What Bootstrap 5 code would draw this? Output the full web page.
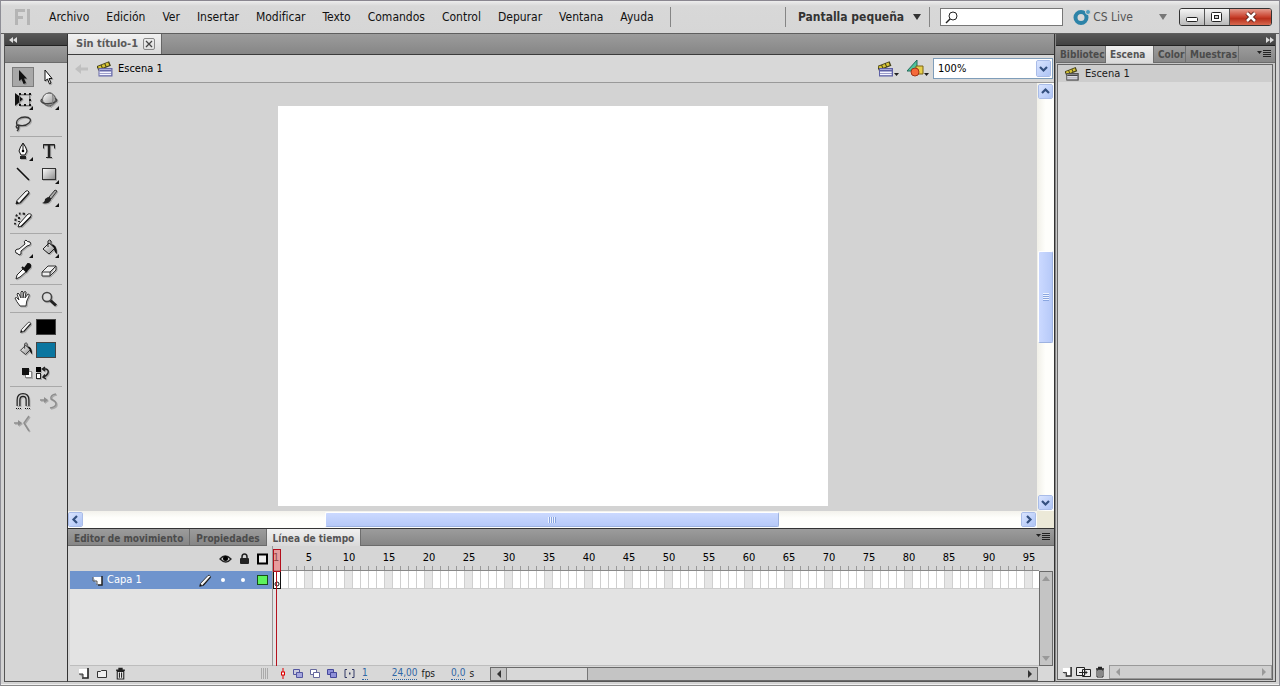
<!DOCTYPE html>
<html lang="es" data-bs-theme="light">
<head>
<meta charset="utf-8">
<meta name="viewport" content="width=device-width, initial-scale=1">
<title>Sin título-1</title>
<link href="https://cdn.jsdelivr.net/npm/bootstrap@5.3.0/dist/css/bootstrap.min.css" rel="stylesheet">
<script src="https://cdn.jsdelivr.net/npm/bootstrap@5.3.0/dist/js/bootstrap.bundle.min.js"></script>
<style>
  :root { --chrome:#d6d6d6; --ink:#1a1a1a; --edge:#4a4a4a; --strip:linear-gradient(#9c9c9c,#868686); }
  body { font-family:"DejaVu Sans Condensed","DejaVu Sans",sans-serif; font-size:11px; line-height:16px; color:var(--ink); background:#d3d3d3; }
  button { padding:0; border:0; background:none; color:inherit; line-height:inherit; }
  svg { display:block; flex:none; }
  .app { height:100vh; min-height:600px; border-top:1px solid #8a8790; border-left:1px solid #8e8e96; border-right:1px solid #8e8e96; border-bottom:1px solid #8a8a8a; }

  /* menu bar */
  .menubar { height:33px; font-size:12px; background:linear-gradient(#ededed,#d8d8d8 5px,#d6d6d6); border-bottom:1px solid #5f5f5f; padding:0 7px 0 13px; }
  .logo { width:35px; }
  .menubar a { color:#111; text-decoration:none; }
  .menus { gap:17px; }
  .vsep { width:1px; height:20px; background:#858585; }
  .workspace { font-size:12px; font-weight:bold; color:#333; gap:9px; }
  .search { width:123px; height:18px; border:1px solid #777; background:#fff; margin:0 10px; }
  .search input { width:100%; min-width:0; border:0; outline:0; background:none; font-size:11px; }
  .cslive { color:#555; gap:2px; }
  .winbtns { border:1px solid #333; border-radius:3px; height:18px; width:93px; overflow:hidden; margin-left:12px; }
  .winbtns button { flex:25 1 0; background:linear-gradient(#f4f4f4,#b9b9b9); border-right:1px solid #555; display:flex; align-items:center; justify-content:center; }
  .winbtns button.closer { flex-grow:42; border:0; background:linear-gradient(#e59a8c,#c8402c 50%,#b8301c 60%,#d8694f); }

  .main { padding:0 3px 2px 3px; min-height:0; border-bottom:1px solid #efefef; }
  .strip { height:17px; background:var(--strip); border-bottom:1px solid #6b6b6b; }
  .darkstrip { height:12px; background:linear-gradient(#585858,#424242); border-bottom:1px solid #222; color:#ddd; }

  /* tool box */
  .toolbox { width:63px; flex:none; background:var(--chrome); border-left:1px solid #555; border-bottom:1px solid #555; }
  .tgroup { margin:0 5px; padding:2px 0; border-bottom:1px solid #a9a9a9; display:grid; grid-template-columns:26px 26px; grid-auto-rows:23px; }
  .tgroup:last-child { border:0; }
  .tgroup button { width:22px; height:20px; margin:auto; display:flex; align-items:center; justify-content:center; position:relative; }
  .tgroup svg { filter:drop-shadow(1px 1px 0 #0003); }
  .tgroup button.on { background:#a8a8a8; border:1px solid #7c7c7c; }
  .more::after { content:""; position:absolute; right:1px; bottom:0; border:2px solid; border-color:transparent #111 #111 transparent; }
  .colours { grid-template-columns:24px 24px; }
  .tgroup .swatch { width:20px; height:16px; border:1px solid #444; }
  .ink { background:#000; } .fill { background:#0a76a0; }

  /* document area */
  .doc { min-width:0; border-left:1px solid #333; border-right:1px solid #333; border-bottom:1px solid #555; background:#e3e3e3; }
  .doctabs { height:21px; background:var(--strip); border-bottom:1px solid #3c3c3c; }
  .doctab { width:94px; background:linear-gradient(#f2f2f2,#d9d9d9); border-right:1px solid #666; font-weight:bold; color:#5a5a5a; padding-left:8px; gap:5px; }
  .shut { width:12px; height:12px; border:1px solid #888; border-radius:2px; color:#555; }
  .editbar { height:28px; background:#d8d8d8; border-bottom:1px solid #999; padding:0 1px 0 7px; }
  .zoombox { width:120px; height:21px; border:1px solid #7f9db9; background:#fff; position:relative; }
  .zoombox select { width:100%; height:100%; border:0; appearance:none; background:none; padding:0 4px; font-size:11px; color:#000; }
  .zoombox span { position:absolute; right:1px; top:1px; pointer-events:none; height:17px; }
  .work { min-height:0; background:#d3d3d3; }
  .pasteboard { padding-top:23px; overflow:hidden; }
  .canvas { width:550px; height:400px; background:#fff; }
  .xpbtn { width:15px; height:15px; border-radius:2px; border:1px solid #fff; background:linear-gradient(135deg,#d9e4ff,#aec4f5); display:flex; align-items:center; justify-content:center; flex:none; outline:1px solid #a9bce8; outline-offset:-1px; color:#34507f; }
  .track-v { width:17px; background:linear-gradient(90deg,#f1f0e8,#fefefb 50%); padding:1px 0 1px 1px; }
  .track-h { height:17px; background:linear-gradient(#f3f2ec,#fefefb 40%); padding:1px 1px 1px 0; flex:1; }
  .knob { border:1px solid #fff; border-bottom-color:#9db2e0; border-right-color:#9db2e0; border-radius:2px; display:flex; align-items:center; justify-content:center; }
  .track-h .knob { height:15px; flex:15 1 0; background:linear-gradient(#cbd9ff,#b6c9f8); }
  .track-v .knob { width:15px; flex:3 1 0; background:linear-gradient(90deg,#cbd9ff,#b6c9f8); }
  .track-h .gap { flex:8 1 0; } .track-v .gap { flex:5 1 0; }
  .corner { width:17px; height:17px; background:#ece9d8; }

  /* panels */
  .ptabs { border-top:1px solid #333; height:18px; background:var(--strip); border-bottom:1px solid #6b6b6b; }
  .ptab { font-size:10px; font-weight:bold; color:#4b4b4b; border-right:1px solid #6e6e6e; height:100%; white-space:nowrap; text-align:left; }
  .ptab.on { background:linear-gradient(#f0f0f0,#dadada); height:calc(100% + 1px); color:#555; }
  .ptabs .ptab { padding:2px 6px 0 6px; }
  .timeline { height:135px; padding-left:2px; background:#d6d6d6; }
  .layers { width:202px; flex:none; }
  .cols { gap:7px; }
  .layers .lhead { height:25px; padding-right:4px; }
  .layer { height:18px; background:#6f94cd; color:#fff; padding:0 4px 0 22px; }
  .empty { background:#e3e3e3; border-bottom:1px solid #bdbdbd; }
  .grid-area { min-width:0; border-left:1px solid #999; position:relative; }
  .ruler { height:25px; overflow:hidden; border-bottom:1px solid #888; color:#000; padding-top:4px; background:repeating-linear-gradient(90deg,transparent 0 7px,#999 7px 8px) left bottom / 100% 4px no-repeat; }
  .ruler span { width:40px; flex:none; text-align:center; }
  .ruler span:first-child { width:16px; }
  .frames { height:18px; background:repeating-linear-gradient(90deg,transparent 0 7px,#cfcfcf 7px 8px),repeating-linear-gradient(90deg,#fff 0 32px,#e6e6e6 32px 40px); border-bottom:1px solid #ccc; }
  .key { width:8px; height:18px; border:1px solid #111; border-top:0; background:#fff; padding-top:10px; }
  .playhead { position:absolute; left:0; top:3px; bottom:0; width:8px; }
  .playhead::before { content:""; display:block; height:23px; border:1px solid #b30f1c; background:#f2777799; }
  .playhead::after { content:""; position:absolute; left:3px; top:23px; bottom:0; width:1px; background:#b5121e; }
  .gbar { background:#c4c4c4; border:1px solid #6a6a6a; color:#333; }
  .gbar.dim { color:#999; }
  .gbar-v { width:14px; margin:25px 1px 0 0; padding:4px 0; }
  .foot { height:15px; background:#d8d8d8; }
  .foot .hot { color:#2f67a5; border-bottom:1px dotted #2f67a5; line-height:12px; font-size:10px; text-decoration:none; }
  .foot .unit { font-size:10px; line-height:12px; }
  .hbar { height:14px; }
  .hbar .cap { width:15px; height:100%; display:flex; align-items:center; justify-content:center; }
  .hbar .bar-knob { width:15%; background:#d8d8d8; border-left:1px solid #777; border-right:1px solid #777; height:100%; }

  .side { width:221px; flex:none; background:#c8c8c8; border-right:1px solid #555; border-bottom:1px solid #555; border-left:1px solid #888; }
  .side .ptab { padding:1px 0 0 4px; }
  .w-lib { width:50px; } .w-scene { width:48px; } .w-colour { width:32px; } .w-swatch { width:53px; }
  .scenes { margin:1px 2px 1px 1px; border:1px solid #666; background:#dcdcdc; }
  .scene { background:#cdcdcd; height:17px; padding-left:7px; gap:5px; }
  .scenefoot { height:14px; }
  .scenes .gbar.dim { background:#cfcfcf; border-color:#999; }
</style>
</head>
<body>
<svg width="0" height="0" class="position-absolute" aria-hidden="true">
  <defs>
    <linearGradient id="lg" x1="0" y1="0" x2="1" y2="1"><stop offset="0" stop-color="#fff"/><stop offset="1" stop-color="#8a8a8a"/></linearGradient>
    <symbol id="clap" viewBox="0 0 16 17"><path d="M0 8.500 12.500 3.500" stroke="#45411a" stroke-width="5"/><path d="M1 8 12 3.500" stroke="#d6c436" stroke-width="3" stroke-dasharray="3 1"/><rect x="1.500" y="8.500" width="13" height="7.500" fill="#f4f4ff" stroke="currentColor"/><path d="M2 10.500h12" stroke="currentColor" stroke-width="2"/><path d="M2 13.500h12M14 9v7M2 15.500h12" stroke="currentColor" stroke-opacity=".6"/></symbol>
    <symbol id="trash" viewBox="0 0 10 12"><path d="M1 3h8M3 1.500h4" stroke="#222" stroke-width="1.500"/><path d="M2 4h6v7H2z" fill="#eee" stroke="#222"/><path d="M4 5v5M6 5v5" stroke="#222"/></symbol>
    <symbol id="page" viewBox="0 0 11 11"><path d="M1 1h9v9H5L1 6z" fill="#fff"/><path d="M10 0v10H4" fill="none" stroke="#222" stroke-width="1.600"/><path d="M1 6h4v4" fill="#999" stroke="#333"/></symbol>
    <symbol id="pencil" viewBox="0 0 18 18"><path d="M3 12.500 12 3q2-1 3 1 0 1-1 2L6 15l-4 1z" fill="#f5f5f5" stroke="#222"/><path d="m2 16 1-3 2 2z" fill="#111"/><path d="M6 15 15 5" stroke="#222" stroke-width="1.500"/></symbol>
    <symbol id="bucket" viewBox="0 0 18 18"><path d="M3 10 9 4l6 5-6 6z" fill="url(#lg)" stroke="#222"/><path d="M8 8V2q2-2 3 0v3" fill="none" stroke="#222"/><path d="M11 5q6 0 6 10-3-2-3-6z" fill="#111"/></symbol>
    <symbol id="chev" viewBox="0 0 9 9"><path d="m1 3 3.500 3.500L8 3" fill="none" stroke="currentColor" stroke-width="2.200"/></symbol>
    <symbol id="menu" viewBox="0 0 14 8"><path d="M0 1h5L2.500 4z" fill="#222"/><path d="M6 .5h8M6 2.500h8M6 4.500h8M6 6.500h8" stroke="#222"/></symbol>
    <symbol id="tri" viewBox="0 0 6 8"><path d="M5 0v8L1 4z" fill="currentColor"/></symbol>
  </defs>
</svg>

<div class="app d-flex flex-column">
  <header class="menubar d-flex align-items-center">
    <div class="logo"><svg width="17" height="18" viewBox="0 0 17 18" fill="none" stroke="#b5b5b5" stroke-width="3" aria-label="Fl"><path d="M2.500 17V2.500H11M2.500 9.500H9M14.500 1v16"/></svg></div>
    <nav class="menus d-flex">
      <a href="#">Archivo</a><a href="#">Edición</a><a href="#">Ver</a><a href="#">Insertar</a><a href="#">Modificar</a><a href="#">Texto</a><a href="#">Comandos</a><a href="#">Control</a><a href="#">Depurar</a><a href="#">Ventana</a><a href="#">Ayuda</a>
    </nav>
    <div class="vsep ms-3"></div>
    <div class="vsep ms-auto me-2"></div>
    <button class="workspace d-flex align-items-center ms-1">Pantalla pequeña <svg width="8" height="6"><path d="M0 0h8L4 6z" fill="#333"/></svg></button>
    <div class="vsep ms-2"></div>
    <label class="search d-flex align-items-center"><svg class="ms-1" width="13" height="13" viewBox="0 0 13 13" fill="none" stroke="#222"><circle cx="8" cy="5" r="4"/><path d="M5 8 1 12" stroke-width="1.500"/></svg><input type="text" aria-label="Buscar"></label>
    <button class="cslive d-flex align-items-center"><svg width="18" height="18" viewBox="0 0 18 18"><circle cx="8" cy="9.500" r="5.500" fill="none" stroke="#2c83a8" stroke-width="4"/><circle cx="15" cy="4" r="2.500" fill="#4c9cbd" stroke="#d6d6d6"/></svg><span>CS Live</span><svg class="ms-4" width="8" height="6"><path d="M0 0h8L4 6z" fill="#777"/></svg></button>
    <div class="winbtns d-flex">
      <button aria-label="Minimizar"><svg width="14" height="12"><rect x="1.500" y="6.500" width="11" height="4" rx="1" fill="#fff" stroke="#222"/></svg></button>
      <button aria-label="Restaurar"><svg width="14" height="12"><rect x="1.500" y="1.500" width="10" height="9" rx="1" fill="#fff" stroke="#222"/><rect x="4.500" y="4.500" width="4" height="3" fill="#ccc" stroke="#222"/></svg></button>
      <button class="closer" aria-label="Cerrar"><svg width="14" height="12"><path d="m3 2 8 8M11 2l-8 8" stroke="#5a2018" stroke-width="4.500"/><path d="m3 2 8 8M11 2l-8 8" stroke="#fff" stroke-width="2.500"/></svg></button>
    </div>
  </header>

  <div class="main d-flex flex-grow-1">
    <aside class="toolbox">
      <div class="darkstrip d-flex align-items-center"><svg class="ms-1" width="9" height="6"><path d="M4 0v6L0 3zM8 0v6L4 3z" fill="#ddd"/></svg></div>
      <div class="strip"></div>
      <div class="tgroup">
        <button class="on" aria-label="Selección"><svg width="18" height="18"><path d="M5 2v11l2.500-2 2 5 2.500-1-2-4.500H13z" fill="#111"/></svg></button>
        <button aria-label="Subselección"><svg width="18" height="18"><path d="M5 2v11l2.500-2 2 5 1.500-1-2-4.500H12z" fill="#fff" stroke="#111"/></svg></button>
        <button class="more" aria-label="Transformación libre"><svg width="20" height="18"><path d="M2 2v13l8-7z" fill="#111"/><rect x="6.500" y="3.500" width="10" height="11" fill="none" stroke="#777"/><path d="M6 2h2v2H6zM11 2h2v2h-2zM16 2h2v2h-2zM16 8h2v2h-2zM16 13h2v2h-2zM11 13h2v2h-2zM6 13h2v2H6z" fill="#111"/></svg></button>
        <button class="more" aria-label="Rotación 3D"><svg width="18" height="18"><circle cx="9" cy="8.500" r="6.500" fill="url(#lg)" stroke="#555"/><path d="M2 8q-3 3 3 4.500 7 1 11-2 2-2-1-3" fill="none" stroke="#444" stroke-width="1.300"/><path d="M8 2q5-2 5 5t-3 9" fill="none" stroke="#777"/></svg></button>
        <button aria-label="Lazo"><svg width="18" height="18" fill="none" stroke="#333" stroke-width="1.300"><path d="M3 11C1 6 6 3 11 3s7 3 4 6-7 3-11 2q-3 1-1 3 3 0 1-3 2 3-1 6"/></svg></button>
      </div>
      <div class="tgroup">
        <button class="more" aria-label="Pluma"><svg width="18" height="18"><path d="M9 1Q6 5 5 9l2 4h4l2-4Q12 5 9 1z" fill="#fff" stroke="#111"/><path d="M9 2v7" stroke="#111"/><circle cx="9" cy="9" r="1.300"/><path d="M6 14h6v3H6z" fill="#222"/></svg></button>
        <button aria-label="Texto"><svg width="18" height="18" fill="none" stroke="#222"><path d="M3.500 6.500v-4h11v4M3 3h12M6 15.500h6"/><path d="M9 3v12" stroke-width="2.500"/></svg></button>
        <button aria-label="Línea"><svg width="18" height="18"><path d="m3 3 12 12" stroke="#111" stroke-width="1.500"/></svg></button>
        <button class="more" aria-label="Rectángulo"><svg width="18" height="18"><rect x="2.500" y="3.500" width="13" height="11" fill="url(#lg)" stroke="#333"/></svg></button>
        <button aria-label="Lápiz"><svg width="18" height="18"><use href="#pencil"/></svg></button>
        <button class="more" aria-label="Pincel"><svg width="18" height="18"><path d="m9 9 6-7 2 1-6 8z" fill="#aaa" stroke="#333"/><path d="M8 9q3 0 3 3-3 5-9 3 3-1 3-4z" fill="#222"/></svg></button>
        <button aria-label="Deco"><svg width="20" height="18"><path d="m6 13 9-10q4-1 3 2L9 15l-4 1z" fill="#fff" stroke="#222"/><path d="m8 15.500 10-10" stroke="#222" stroke-width="1.500"/><path d="M12 3Q4 1 3 6T2 14M6 6v5" fill="none" stroke="#222" stroke-width="2" stroke-dasharray="2 2"/></svg></button>
      </div>
      <div class="tgroup">
        <button class="more" aria-label="Hueso"><svg width="18" height="18"><path d="m5 10 6-5q-2-3 1-4 1 2 4 2 2 3-3 4l-6 5q1 4-2 4-1-2-3-2-2-4 3-4z" fill="#f8f8f8" stroke="#222"/></svg></button>
        <button class="more" aria-label="Cubo de pintura"><svg width="18" height="18"><use href="#bucket"/></svg></button>
        <button aria-label="Cuentagotas"><svg width="18" height="18"><path d="m3 13 7-7 3 3-7 6-4 2z" fill="#fff" stroke="#222"/><path d="m8 5 5 5M11 6l3-4q3 0 2 3l-3 3z" stroke="#111" stroke-width="2" fill="#111"/></svg></button>
        <button aria-label="Borrador"><svg width="18" height="18"><path d="m2 10 6-6h8l-6 6zM2 10v4h8v-4M10 14l6-6V4" fill="#eee" stroke="#333"/></svg></button>
      </div>
      <div class="tgroup">
        <button aria-label="Mano"><svg width="18" height="18"><path d="M6 16Q2 11 1 8q1-2 4 2L3 4q1-2 2 0l2 4V2q1-2 2 0v6l1-6q2-1 2 0l-1 6 3-4q2 0 1 2-3 5-3 10z" fill="#fff" stroke="#333"/></svg></button>
        <button aria-label="Zoom"><svg width="18" height="18"><circle cx="7" cy="7" r="4.500" fill="#ddd" stroke="#444" stroke-width="1.500"/><path d="m10.500 10.500 5.500 5" stroke="#222" stroke-width="3"/></svg></button>
      </div>
      <div class="tgroup colours">
        <button aria-label="Trazo"><svg class="ms-auto" width="14" height="14"><use href="#pencil"/></svg></button>
        <button class="swatch ink" aria-label="Color de trazo"></button>
        <button aria-label="Relleno"><svg class="ms-auto" width="15" height="15"><use href="#bucket"/></svg></button>
        <button class="swatch fill" aria-label="Color de relleno"></button>
        <button aria-label="Blanco y negro"><svg class="ms-auto" width="12" height="12"><rect x="4.500" y="4.500" width="6" height="6" fill="#fff" stroke="#888"/><path d="M1 1h7v7H1z" fill="#111"/></svg></button>
        <button aria-label="Intercambiar"><svg class="me-auto" width="16" height="14"><path d="M1 1h5v5H1z"/><rect x="1.500" y="7.500" width="4" height="5" fill="#fff" stroke="#222"/><path d="M8 3h3q3 1 2 4t-5 4M10 1 7.500 3 10 5M10 8.500l-2 2.500 3 2" fill="none" stroke="#222" stroke-width="1.500"/></svg></button>
      </div>
      <div class="tgroup">
        <button aria-label="Ajustar"><svg width="18" height="18"><path d="M4.500 14V8q0-5 4.500-5t4.500 5v6" fill="none" stroke="#222" stroke-width="4"/><path d="M4.500 14V8q0-5 4.500-5t4.500 5v6" fill="none" stroke="#ccc" stroke-width="1.500"/><path d="M2 16.500h5M11 16.500h5" stroke="#111" stroke-dasharray="1 1"/></svg></button>
        <button aria-label="Suavizar"><svg width="18" height="18" fill="none" stroke="#8e8e8e" stroke-width="1.500"><path d="M0 8h7M16 2q-6 1-5 5 5 2 5 5t-6 4"/><path d="m4 5 4 3-4 3z" fill="#8e8e8e" stroke="none"/></svg></button>
        <button aria-label="Enderezar"><svg width="18" height="18" fill="none" stroke="#8e8e8e" stroke-width="1.500"><path d="M0 8h7M15 1l-5 7 5 8"/><path d="m4 5 4 3-4 3z" fill="#8e8e8e" stroke="none"/></svg></button>
      </div>
    </aside>

    <main class="doc d-flex flex-column flex-grow-1">
      <div class="doctabs d-flex">
        <div class="doctab d-flex align-items-center">Sin título-1 <button class="shut d-flex align-items-center justify-content-center" aria-label="Cerrar documento"><svg width="8" height="8"><path d="m1 1 6 6M7 1 1 7" stroke="#444" stroke-width="1.300"/></svg></button></div>
      </div>
      <div class="editbar d-flex align-items-center">
        <svg width="14" height="10"><path d="M3 5h10" stroke="#c0c0c0" stroke-width="3"/><path d="M6 0v10L0 5z" fill="#c0c0c0"/></svg>
        <svg class="ms-2 me-1" width="17" height="17" color="#6669a8"><use href="#clap"/></svg><span class="text-black">Escena 1</span>
        <button class="ms-auto d-flex align-items-end" aria-label="Editar escena"><svg width="16" height="17" color="#5d60a5"><use href="#clap"/></svg><svg width="5" height="4"><path d="M0 0h5L2.500 3z" fill="#222"/></svg></button>
        <button class="ms-2 me-1 d-flex align-items-end" aria-label="Editar símbolos"><svg width="17" height="17"><path d="M0 11 10 0v11z" fill="#4fc39b" stroke="#236b5b"/><path d="M9 6h7v8H9z" fill="#e7cf4a" stroke="#7c6514"/><circle cx="8" cy="12" r="4" fill="#f5693a" stroke="#a03317"/></svg><svg width="5" height="4"><path d="M0 0h5L2.500 3z" fill="#222"/></svg></button>
        <div class="zoombox"><select aria-label="Zoom"><option>100%</option><option>50%</option><option>200%</option></select><span class="xpbtn"><svg width="9" height="9"><use href="#chev"/></svg></span></div>
      </div>

      <div class="work d-flex flex-grow-1">
        <div class="pasteboard flex-grow-1 d-flex justify-content-center align-items-start"><div class="canvas flex-shrink-0"></div></div>
        <div class="track-v d-flex flex-column">
          <button class="xpbtn" aria-label="Subir"><svg width="9" height="9" viewBox="0 0 9 9"><path d="m1 6 3.500-3.500L8 6" fill="none" stroke="#34507f" stroke-width="2.200"/></svg></button>
          <div class="gap"></div><div class="knob"><svg width="6" height="8"><path d="M0 .5h6M0 2.500h6M0 4.500h6M0 6.500h6" stroke="#eef3ff"/><path d="M0 1.500h6M0 3.500h6M0 5.500h6M0 7.500h6" stroke="#8aa6e0"/></svg></div><div class="gap"></div>
          <button class="xpbtn" aria-label="Bajar"><svg width="9" height="9"><use href="#chev"/></svg></button>
        </div>
      </div>
      <div class="d-flex">
        <div class="track-h d-flex align-items-center">
          <button class="xpbtn" aria-label="Izquierda"><svg width="9" height="9"><path d="M6 1 2.500 4.500 6 8" fill="none" stroke="#34507f" stroke-width="2.200"/></svg></button>
          <div class="gap"></div><div class="knob"><svg width="8" height="6"><path d="M.5 0v6M2.500 0v6M4.500 0v6M6.500 0v6" stroke="#eef3ff"/><path d="M1.500 0v6M3.500 0v6M5.500 0v6M7.500 0v6" stroke="#8aa6e0"/></svg></div><div class="gap"></div>
          <button class="xpbtn" aria-label="Derecha"><svg width="9" height="9"><path d="M3 1l3.500 3.500L3 8" fill="none" stroke="#34507f" stroke-width="2.200"/></svg></button>
        </div>
        <div class="corner"></div>
      </div>

      <div class="ptabs d-flex">
        <button class="ptab">Editor de movimiento</button><button class="ptab">Propiedades</button><button class="ptab on">Línea de tiempo</button>
        <button class="ms-auto me-1" aria-label="Opciones del panel"><svg width="14" height="8"><use href="#menu"/></svg></button>
      </div>
      <section class="timeline d-flex flex-column">
        <div class="d-flex flex-grow-1">
          <div class="layers d-flex flex-column">
            <div class="lhead d-flex align-items-center justify-content-end cols">
              <svg width="13" height="10"><path d="M1 5q5-6 11 0-5 6-11 0z" fill="#ccc" stroke="#222" stroke-width="1.300"/><circle cx="6.500" cy="4.500" r="2.500"/></svg>
              <svg width="11" height="12"><path d="M3 6V4q0-3 2.500-3T8 4v2" fill="none" stroke="#222" stroke-width="1.500"/><rect x="1" y="5" width="9" height="6" rx="1" fill="#222"/></svg>
              <svg width="11" height="12"><rect x="1" y="1.500" width="9" height="9" fill="#eee" stroke="#000" stroke-width="2"/></svg>
            </div>
            <div class="layer d-flex align-items-center">
              <svg width="11" height="12" viewBox="0 0 11 12"><path d="M1 3h9v8H6z" fill="#fff"/><path d="M10 2v9H6" fill="none" stroke="#222" stroke-width="1.500"/><path d="M1 3v4h4v4" fill="#ddd" stroke="#555"/></svg>
              <span class="ms-1 me-auto">Capa 1</span>
              <svg class="me-2" width="15" height="15"><use href="#pencil"/></svg>
              <svg class="me-3" width="4" height="4"><circle cx="2" cy="2" r="2" fill="#fff"/></svg>
              <svg class="me-2" width="4" height="4"><circle cx="2" cy="2" r="2" fill="#fff"/></svg>
              <svg class="ms-1" width="11" height="12"><rect x=".5" y="1.500" width="10" height="9" fill="#5cf25c" stroke="#174d17"/></svg>
            </div>
            <div class="empty flex-grow-1"></div>
          </div>
          <div class="grid-area flex-grow-1 d-flex flex-column">
            <div class="ruler d-flex"><span class="text-start">1</span><span>5</span><span>10</span><span>15</span><span>20</span><span>25</span><span>30</span><span>35</span><span>40</span><span>45</span><span>50</span><span>55</span><span>60</span><span>65</span><span>70</span><span>75</span><span>80</span><span>85</span><span>90</span><span>95</span></div>
            <div class="frames"><div class="key"><svg width="6" height="6"><circle cx="3" cy="3" r="2" fill="none" stroke="#111"/></svg></div></div>
            <div class="empty flex-grow-1"></div>
            <div class="playhead"></div>
          </div>
          <div class="gbar gbar-v dim d-flex flex-column align-items-center justify-content-between"><svg width="8" height="5"><path d="M0 5h8L4 0z" fill="currentColor"/></svg><svg width="8" height="5"><path d="M0 0h8L4 5z" fill="currentColor"/></svg></div>
        </div>
        <div class="foot d-flex align-items-center">
          <div class="layers d-flex align-items-center ps-2 pe-1 cols">
            <button aria-label="Nueva capa"><svg width="11" height="11"><use href="#page"/></svg></button>
            <button aria-label="Nueva carpeta"><svg width="12" height="10"><path d="M1.500 8.500v-6h3l1-1h5v7z" fill="#eee" stroke="#333"/></svg></button>
            <button aria-label="Eliminar"><svg width="11" height="13"><use href="#trash"/></svg></button>
            <svg class="ms-auto" width="7" height="11"><path d="M.5 0v11M2.500 0v11M4.500 0v11M6.500 0v11" stroke="#aaa"/></svg>
          </div>
          <div class="flex-grow-1 d-flex align-items-center pe-3">
            <div class="d-flex align-items-center cols ms-2">
              <svg width="6" height="11"><path d="M3 0v11" stroke="#d00"/><rect x="1.500" y="4" width="3" height="3" fill="#fff" stroke="#d00"/></svg>
              <svg width="10" height="11" stroke="#5356a0"><path d="M.5 1.500h6v5h-6z" fill="#ccd"/><path d="M3.500 4.500h6v5h-6z" fill="#a5a6dd"/></svg>
              <svg width="10" height="11" stroke="#66689c"><path d="M.5 1.500h6v5h-6z" fill="#fff"/><path d="M3.500 4.500h6v5h-6z" fill="#fff"/></svg>
              <svg width="10" height="11" stroke="#45489b"><path d="M.5 1.500h6v5h-6z" fill="#8f91d8"/><path d="M3.500 4.500h6v5h-6z" fill="#8f91d8"/></svg>
              <svg width="11" height="11" fill="none" stroke="#333a66"><path d="M3 1.500H1v8h2M8 1.500h2v8H8"/><path d="M5 5.500h1.500" stroke-width="2"/></svg>
              <a href="#" class="hot">1</a>
            </div>
            <a href="#" class="hot ms-4 me-1">24,00</a><span class="unit">fps</span>
            <a href="#" class="hot ms-3 me-1">0,0</a><span class="unit">s</span>
            <div class="gbar hbar ms-3 flex-grow-1 d-flex"><div class="cap"><svg width="6" height="8"><use href="#tri"/></svg></div><div class="bar-knob"></div><div class="cap ms-auto"><svg width="6" height="8"><path d="M1 0v8l4-4z" fill="#333"/></svg></div></div>
          </div>
        </div>
      </section>
    </main>

    <aside class="side d-flex flex-column">
      <div class="darkstrip d-flex align-items-center justify-content-end"><svg width="9" height="6"><path d="M0 0v6l4-3zM4 0v6l4-3z" fill="#ddd"/></svg></div>
      <div class="strip d-flex">
        <button class="ptab w-lib">Bibliotec</button><button class="ptab on w-scene">Escena</button><button class="ptab w-colour">Color</button><button class="ptab w-swatch">Muestras</button>
        <button class="ms-auto me-1" aria-label="Opciones del panel"><svg width="14" height="8"><use href="#menu"/></svg></button>
      </div>
      <div class="scenes flex-grow-1 d-flex flex-column">
        <div class="scene d-flex align-items-center"><svg width="15" height="15" color="#444"><use href="#clap"/></svg><span>Escena 1</span></div>
        <div class="scenefoot d-flex align-items-center mt-auto">
          <button class="ms-1" aria-label="Añadir escena"><svg width="10" height="10"><use href="#page"/></svg></button>
          <button class="ms-1" aria-label="Duplicar escena"><svg width="15" height="12"><path d="M.5 1.500h8v8h-8zM6.500 3.500h8v7h-8z" fill="#eee" stroke="#222"/><path d="M3 6.500h8M9 4.500l2 2-2 2" fill="none" stroke="#222"/></svg></button>
          <button class="ms-1 me-1" aria-label="Eliminar escena"><svg width="10" height="12"><use href="#trash"/></svg></button>
          <div class="gbar hbar dim flex-grow-1 d-flex justify-content-between"><div class="cap"><svg width="6" height="8"><use href="#tri"/></svg></div><div class="cap"><svg width="6" height="8"><path d="M1 0v8l4-4z" fill="#999"/></svg></div></div>
        </div>
      </div>
    </aside>
  </div>
</div>
</body>
</html>
